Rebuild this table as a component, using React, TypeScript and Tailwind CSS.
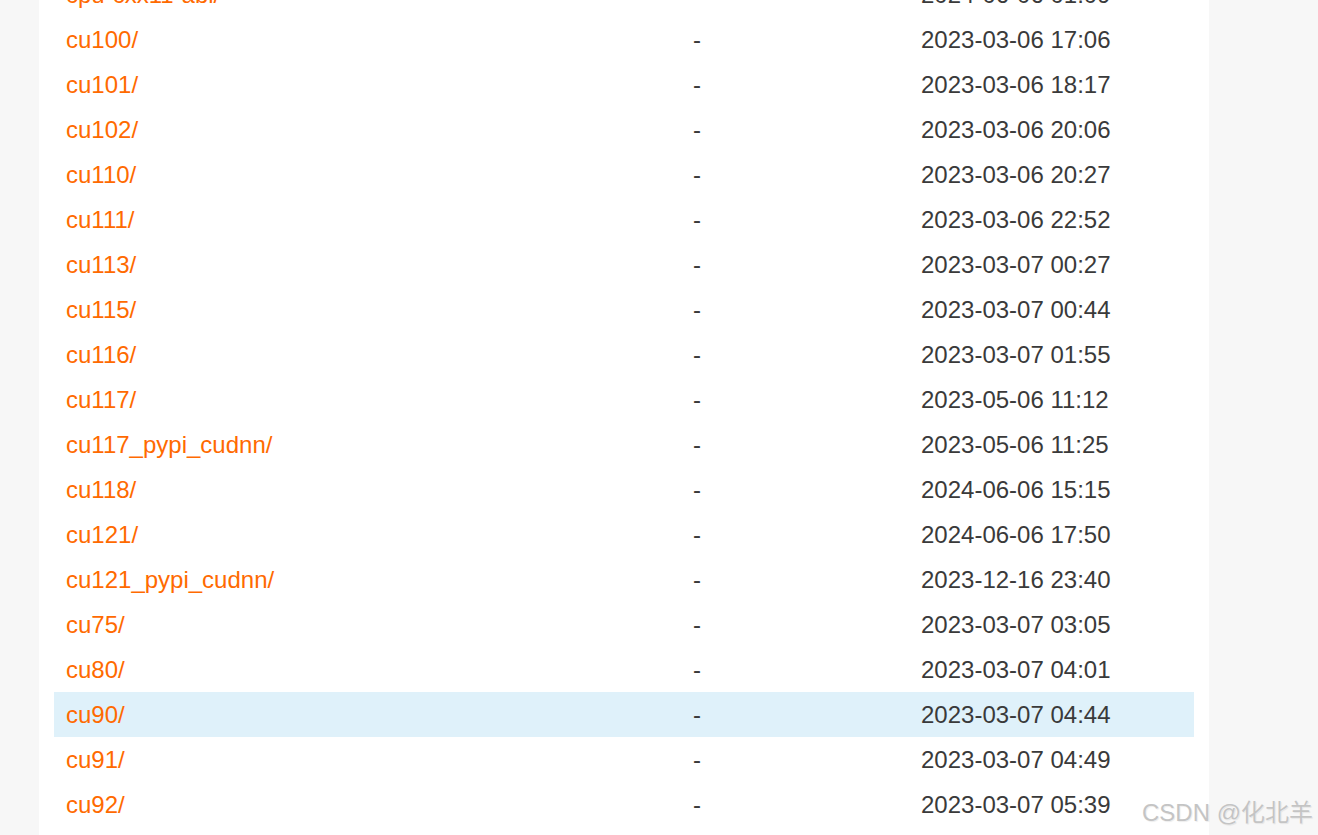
const rows = [
  { name: 'cpu-cxx11-abi/', date: '2024-06-06 01:09' },
  { name: 'cu100/', date: '2023-03-06 17:06' },
  { name: 'cu101/', date: '2023-03-06 18:17' },
  { name: 'cu102/', date: '2023-03-06 20:06' },
  { name: 'cu110/', date: '2023-03-06 20:27' },
  { name: 'cu111/', date: '2023-03-06 22:52' },
  { name: 'cu113/', date: '2023-03-07 00:27' },
  { name: 'cu115/', date: '2023-03-07 00:44' },
  { name: 'cu116/', date: '2023-03-07 01:55' },
  { name: 'cu117/', date: '2023-05-06 11:12' },
  { name: 'cu117_pypi_cudnn/', date: '2023-05-06 11:25' },
  { name: 'cu118/', date: '2024-06-06 15:15' },
  { name: 'cu121/', date: '2024-06-06 17:50' },
  { name: 'cu121_pypi_cudnn/', date: '2023-12-16 23:40' },
  { name: 'cu75/', date: '2023-03-07 03:05' },
  { name: 'cu80/', date: '2023-03-07 04:01' },
  { name: 'cu90/', date: '2023-03-07 04:44' },
  { name: 'cu91/', date: '2023-03-07 04:49' },
  { name: 'cu92/', date: '2023-03-07 05:39' },
  { name: 'rocm4.0.1/', date: '2023-03-07 06:12' },
];

export default function App() {
  return (
    <div className="relative h-[835px] overflow-hidden bg-[#f7f7f7] font-['Liberation_Sans',Arial,sans-serif]">
      <div className="ml-[39px] w-[1170px] h-full bg-white px-[15px] overflow-hidden">
        <table className="-mt-[28px] w-full border-collapse text-[24px] leading-[45px]">
          <tbody>
            {rows.map((r) => (
              <tr key={r.name} className={r.name === 'cu90/' ? 'bg-[#dff1fa]' : ''}>
                <td className="w-[627px] h-[45px] px-3 p-0 text-[#ff6a00]">
                  <a href="#" className="text-[#ff6a00]">{r.name}</a>
                </td>
                <td className="w-[228px] h-[45px] px-3 text-[#3a3a3a]">-</td>
                <td className="h-[45px] px-3 text-[#3a3a3a] whitespace-nowrap">{r.date}</td>
              </tr>
            ))}
          </tbody>
        </table>
      </div>
      <div className="absolute right-[5px] bottom-[10px] text-[24px] leading-none text-[#c4c4c4] [text-shadow:0_0_1px_rgba(255,255,255,0.9),1px_1px_1px_rgba(0,0,0,0.08)] font-['Liberation_Sans','Noto_Sans_CJK_SC',sans-serif] whitespace-nowrap">
        CSDN @化北羊
      </div>
    </div>
  );
}
